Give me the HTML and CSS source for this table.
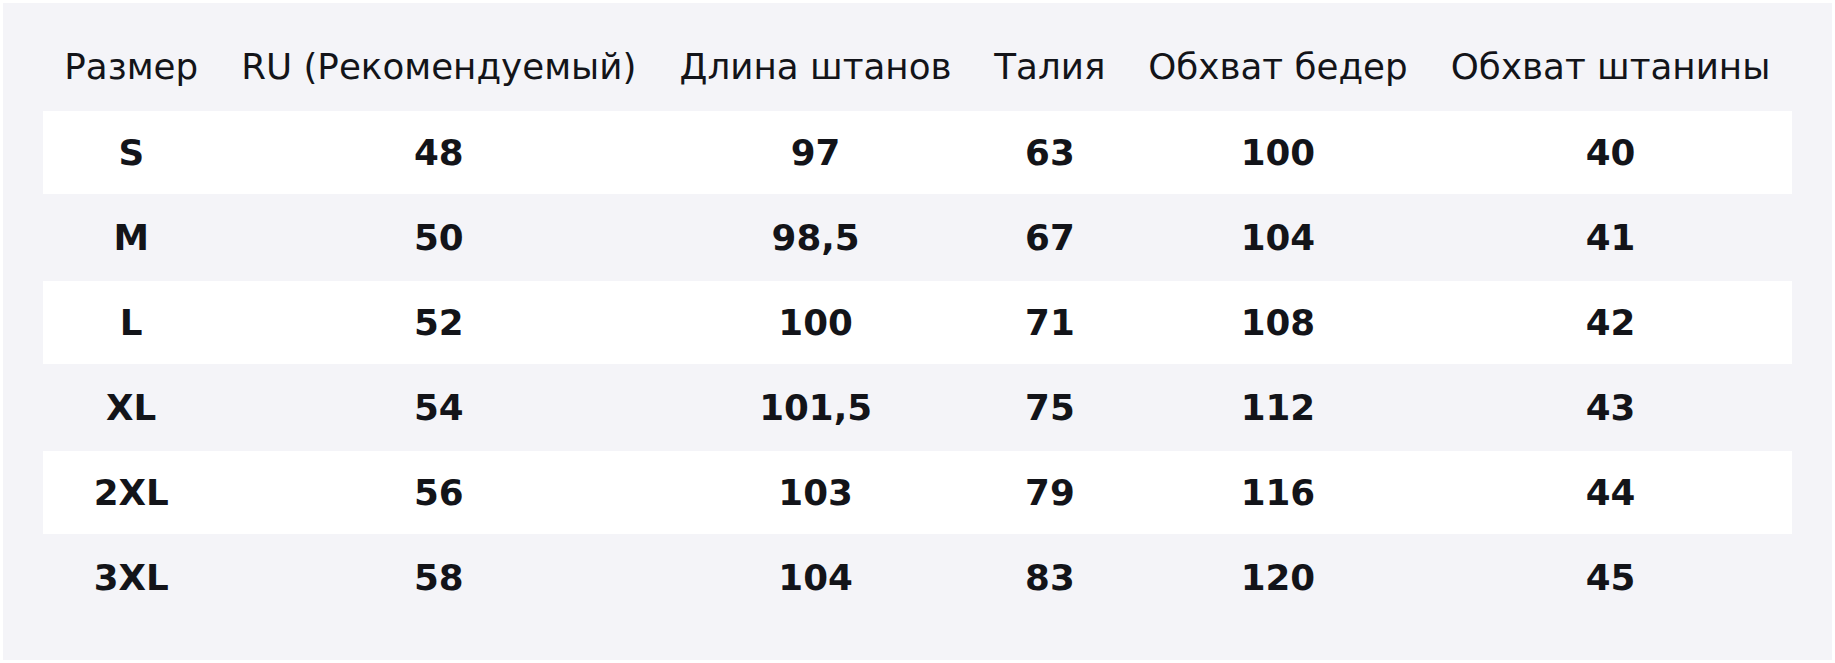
FILE: index.html
```html
<!DOCTYPE html>
<html lang="ru">
<head>
<meta charset="utf-8">
<title>Таблица размеров</title>
<link rel="stylesheet" href="styles.css">
</head>
<body>
<div class="panel">
  <table class="sizes">
    <thead>
      <tr>
        <th>Размер</th>
        <th>RU (Рекомендуемый)</th>
        <th>Длина штанов</th>
        <th>Талия</th>
        <th>Обхват бедер</th>
        <th>Обхват штанины</th>
      </tr>
    </thead>
    <tbody>
      <tr class="odd"><td>S</td><td>48</td><td>97</td><td>63</td><td>100</td><td>40</td></tr>
      <tr class="even"><td>M</td><td>50</td><td>98,5</td><td>67</td><td>104</td><td>41</td></tr>
      <tr class="odd"><td>L</td><td>52</td><td>100</td><td>71</td><td>108</td><td>42</td></tr>
      <tr class="even"><td>XL</td><td>54</td><td>101,5</td><td>75</td><td>112</td><td>43</td></tr>
      <tr class="odd"><td>2XL</td><td>56</td><td>103</td><td>79</td><td>116</td><td>44</td></tr>
      <tr class="even"><td>3XL</td><td>58</td><td>104</td><td>83</td><td>120</td><td>45</td></tr>
    </tbody>
  </table>
</div>
</body>
</html>
```
FILE: styles.css
```css
html, body {
  margin: 0;
  padding: 0;
  background: #ffffff;
}
body {
  padding: 3px;
  font-family: "DejaVu Sans", Verdana, sans-serif;
  color: #131419;
}
.panel {
  background: #f4f4f8;
  height: 657px;
  box-sizing: border-box;
  padding: 40px;
}
.sizes {
  width: 100%;
  border-collapse: collapse;
  font-size: 35.7px;
  line-height: 42px;
}
.sizes th {
  font-weight: normal;
  padding: 3px 21px 23px;
  white-space: nowrap;
  text-align: center;
}
.sizes td {
  font-weight: bold;
  text-align: center;
  padding: 21px 21px 20px;
  border-bottom: 2px solid #f4f4f8;
}
.sizes tr.odd td {
  background: #ffffff;
}
.sizes tr.even td {
  background: #f4f4f8;
}
```
